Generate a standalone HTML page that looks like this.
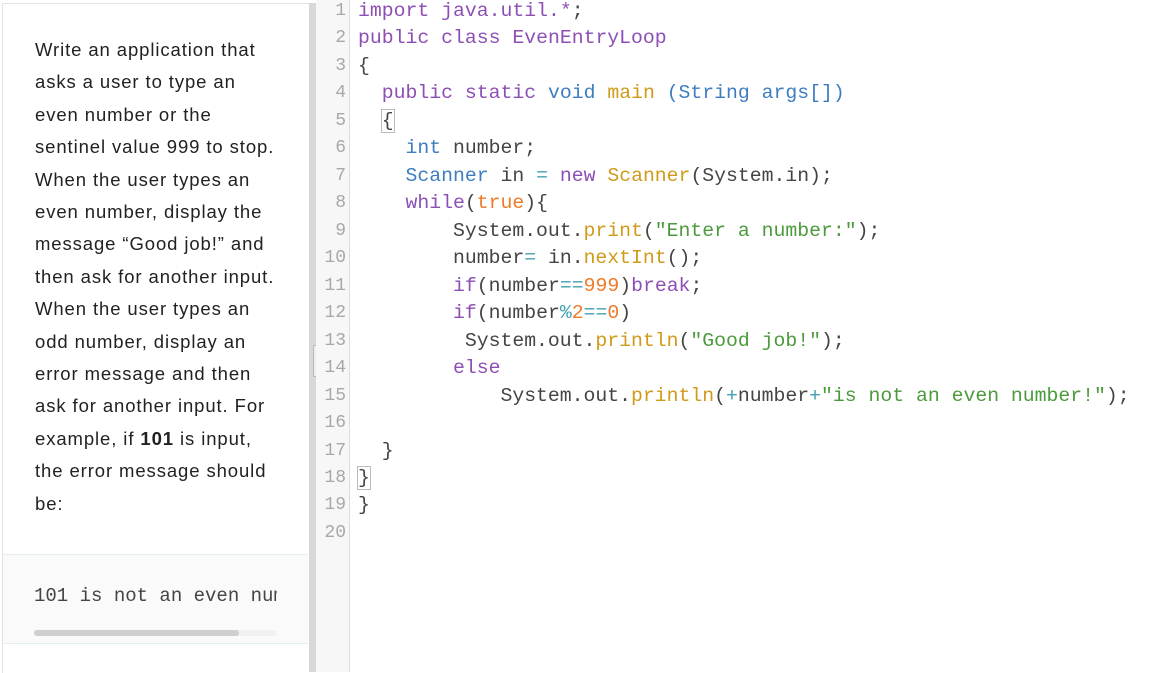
<!DOCTYPE html>
<html><head><style>
body{margin:0;width:1167px;height:672px;background:#fff;position:relative;overflow:hidden;font-family:"Liberation Sans",sans-serif}
#left{position:absolute;left:2px;top:3px;width:306px;height:669px;border-left:1px solid #e3e3e3;border-top:1px solid #e3e3e3;background:#fff}
#sb{position:absolute;left:309px;top:3px;width:7px;height:669px;background:#d8d8d8}
#sbthumb{position:absolute;left:313px;top:345px;width:4px;height:30px;border:1px solid #bbb;background:#eee}
#txt{position:absolute;left:35px;top:34px;font-size:18.5px;letter-spacing:0.9px;line-height:32.4px;color:#222}
#ex{position:absolute;left:3px;top:554px;width:305px;height:88px;background:#fafafa;border-top:1px solid #e3eef0;border-bottom:1px solid #e3eef0}
#ex .t{position:absolute;left:31px;top:30px;font-family:"Liberation Mono",monospace;font-size:19px;color:#444;width:243px;overflow:hidden;white-space:nowrap}
#ex .tr{position:absolute;left:31px;top:75px;width:243px;height:6px;background:#f1f1f1;border-radius:3px}
#ex .th{position:absolute;left:31px;top:75px;width:205px;height:6px;background:#cfcfcf;border-radius:3px}
#gut{position:absolute;left:316px;top:0;width:33px;height:672px;background:#f7f7f7;border-right:1px solid #ddd}
#nums{position:absolute;left:316px;top:-2px;width:30px;text-align:right;font-family:"Liberation Mono",monospace;font-size:18px;line-height:27.47px;color:#a8a8a8}
#code{position:absolute;left:358px;top:-2px;font-family:"Liberation Mono",monospace;font-size:19.8px;line-height:27.47px;color:#444;white-space:pre}
.k{color:#8d4fb5}.b{color:#3d7dc0}.m{color:#d09a1a}.n{color:#f07a28}.s{color:#4b9a3c}.o{color:#40a0b0}
.box{outline:1px solid #bbb}
</style></head><body>
<div id="left"></div>
<div id="txt">Write an application that<br>asks a user to type an<br>even number or the<br>sentinel value 999 to stop.<br>When the user types an<br>even number, display the<br>message “Good job!” and<br>then ask for another input.<br>When the user types an<br>odd number, display an<br>error message and then<br>ask for another input. For<br>example, if <b>101</b> is input,<br>the error message should<br>be:</div>
<div id="ex"><div class="t">101 is not an even number!</div><div class="tr"></div><div class="th"></div></div>
<div id="sb"></div><div id="sbthumb"></div>
<div id="gut"></div>
<div id="nums">1<br>2<br>3<br>4<br>5<br>6<br>7<br>8<br>9<br>10<br>11<br>12<br>13<br>14<br>15<br>16<br>17<br>18<br>19<br>20</div>
<div id="code"><span class="k">import</span> <span class="k">java.util.*</span>;
<span class="k">public</span> <span class="k">class</span> <span class="k">EvenEntryLoop</span>
{
  <span class="k">public</span> <span class="k">static</span> <span class="b">void</span> <span class="m">main</span> <span class="b">(String args[])</span>
  <span class="box">{</span>
    <span class="b">int</span> number;
    <span class="b">Scanner</span> in <span class="o">=</span> <span class="k">new</span> <span class="m">Scanner</span>(System.in);
    <span class="k">while</span>(<span class="n">true</span>){
        System.out.<span class="m">print</span>(<span class="s">"Enter a number:"</span>);
        number<span class="o">=</span> in.<span class="m">nextInt</span>();
        <span class="k">if</span>(number<span class="o">==</span><span class="n">999</span>)<span class="k">break</span>;
        <span class="k">if</span>(number<span class="o">%</span><span class="n">2</span><span class="o">==</span><span class="n">0</span>)
         System.out.<span class="m">println</span>(<span class="s">"Good job!"</span>);
        <span class="k">else</span>
            System.out.<span class="m">println</span>(<span class="o">+</span>number<span class="o">+</span><span class="s">"is not an even number!"</span>);

  }
<span class="box">}</span>
}
</div>
</body></html>
